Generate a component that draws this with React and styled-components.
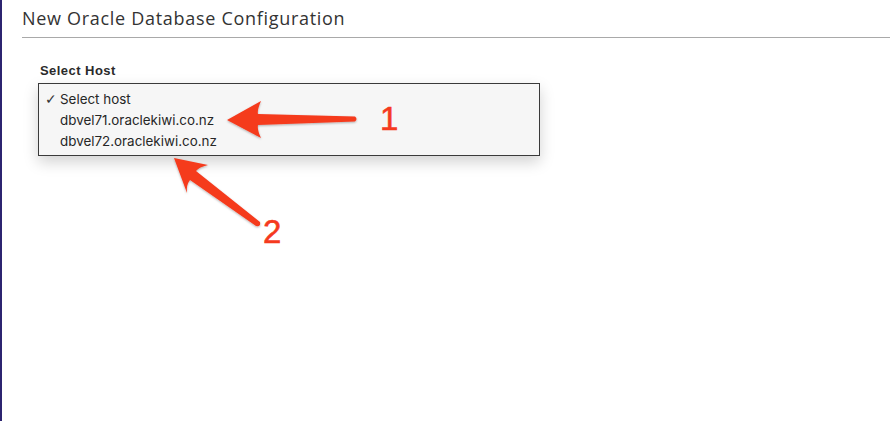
import React from "react";
import styled, { createGlobalStyle } from "styled-components";

const Global = createGlobalStyle`
  html, body { margin: 0; padding: 0; background: #fff; }
  body { font-family: "Open Sans", "Liberation Sans", sans-serif; }
`;

const Page = styled.div`
  position: relative;
  width: 890px;
  height: 421px;
  box-sizing: border-box;
  border-left: 2px solid #2c2470;
  overflow: hidden;
  background: #fff;
`;

const Header = styled.header`
  margin-left: 20px;
  height: 38px;
  box-sizing: border-box;
  padding-top: 6px;
  border-bottom: 1px solid #a9a9a9;
`;

const Title = styled.h1`
  margin: 0;
  font-family: "Open Sans", "Liberation Sans", sans-serif;
  font-weight: 400;
  font-size: 18px;
  line-height: 24px;
  letter-spacing: 0.7px;
  color: #333;
`;

const Body = styled.div`
  padding: 26px 0 0 36px;
`;

const Label = styled.div`
  font-family: "Liberation Sans", Arial, sans-serif;
  font-weight: 700;
  font-size: 13px;
  line-height: 14px;
  color: #2a2a2a;
  margin: 0 0 5px 2px;
  letter-spacing: 0.45px;
`;

const Menu = styled.div`
  width: 502px;
  height: 73px;
  box-sizing: border-box;
  border: 1px solid #3a3a3a;
  background: #f6f6f6;
  box-shadow: 0 6px 14px rgba(0, 0, 0, 0.18);
  padding: 4px 0 0 6px;
`;

const Option = styled.div`
  display: flex;
  align-items: center;
  height: 21px;
  font-family: "Inter", "Liberation Sans", sans-serif;
  font-size: 13.4px;
  color: #262626;
`;

const Check = styled.span`
  width: 15px;
  font-family: "Noto Sans", "DejaVu Sans", sans-serif;
  font-weight: 300;
  font-size: 14px;
  line-height: 15px;
  color: #333;
`;

const Arrow = styled.svg`
  position: absolute;
  left: 0;
  top: 0;
  pointer-events: none;
`;

const Num = styled.span`
  position: absolute;
  left: ${(p) => p.x}px;
  top: ${(p) => p.y}px;
  font-family: "Liberation Sans", Arial, sans-serif;
  font-size: 33px;
  line-height: 33px;
  color: #f53a1e;
  -webkit-text-stroke: 0.6px #f53a1e;
`;

export default function App() {
  return (
    <>
      <Global />
      <Page>
        <Header>
          <Title>New Oracle Database Configuration</Title>
        </Header>
        <Body>
          <Label>Select Host</Label>
          <Menu>
            <Option>
              <Check>✓</Check>Select host
            </Option>
            <Option>
              <Check />dbvel71.oraclekiwi.co.nz
            </Option>
            <Option>
              <Check />dbvel72.oraclekiwi.co.nz
            </Option>
          </Menu>
        </Body>
        <Arrow width="890" height="421" viewBox="0 0 890 421">
          <defs>
            <filter id="sh" x="-20%" y="-50%" width="140%" height="200%">
              <feDropShadow dx="0" dy="1" stdDeviation="1.2" floodColor="#000" floodOpacity="0.3" />
            </filter>
          </defs>
          <path
            d="M225 120 L259 101 Q255 110 256 114 L353 116.5 Q356 119 353 121.5 L256 125 Q255 130 259 138 Z"
            fill="#f53a1e"
            filter="url(#sh)"
          />
          <path
            d="M172 158 L206 165 Q197 167 194 171 L258 222 Q259 227 254 226 L188 180 Q184 185 185 193 Z"
            fill="#f53a1e"
            filter="url(#sh)"
          />
        </Arrow>
        <Num x={378} y={102}>1</Num>
        <Num x={261} y={215}>2</Num>
      </Page>
    </>
  );
}
